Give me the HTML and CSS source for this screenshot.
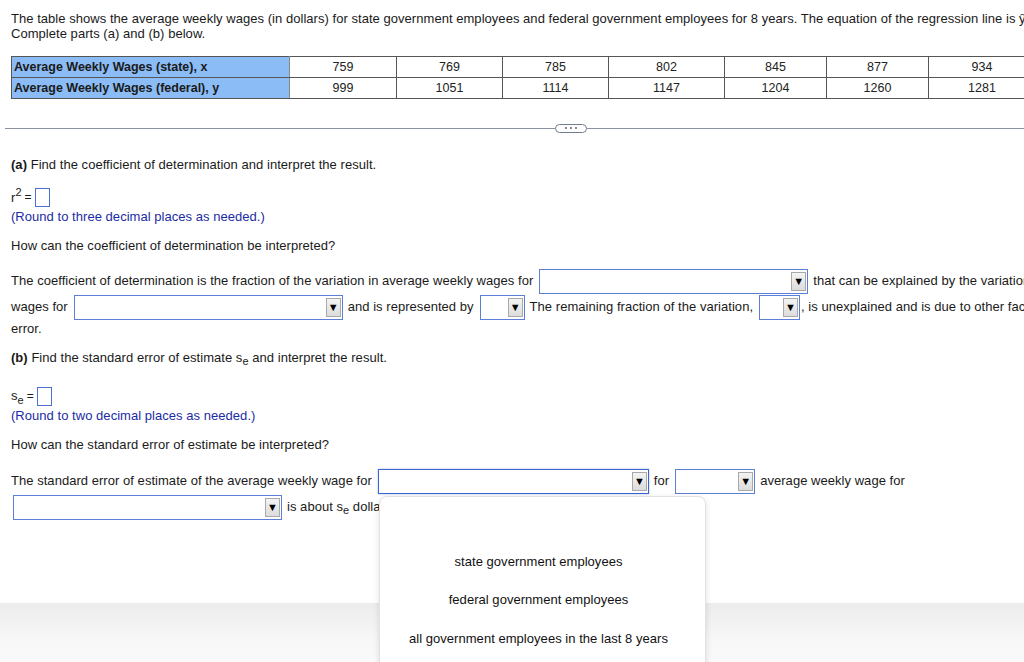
FILE: index.html
```html
<!DOCTYPE html>
<html>
<head>
<meta charset="utf-8">
<link rel="stylesheet" href="styles.css">
</head>
<body>
<div class="page">
  <div class="content">
    <div class="intro">
      <div class="line">The table shows the average weekly wages (in dollars) for state government employees and federal government employees for 8 years. The equation of the regression line is <span class="yhat">ŷ</span> = 1.264x + 37.49.</div>
      <div class="line">Complete parts (a) and (b) below.</div>
    </div>
    <table class="data">
      <tr>
        <th>Average Weekly Wages (state), x</th>
        <td class="c1">759</td><td class="c2">769</td><td class="c3">785</td><td class="c4">802</td><td class="c5">845</td><td class="c6">877</td><td class="c7">934</td>
      </tr>
      <tr>
        <th>Average Weekly Wages (federal), y</th>
        <td>999</td><td>1051</td><td>1114</td><td>1147</td><td>1204</td><td>1260</td><td>1281</td>
      </tr>
    </table>
  </div>

  <div class="divider">
    <span class="rule"></span>
    <span class="pill"><i></i><i></i><i></i></span>
    <span class="rule"></span>
  </div>

  <div class="content">
    <p class="q q-a"><b>(a)</b> Find the coefficient of determination and interpret the result.</p>
    <div class="answer r2"><span class="rvar">r<sup>2</sup></span> <span class="eq">=</span> <span class="box"></span></div>
    <p class="hint">(Round to three decimal places as needed.)</p>
    <p class="q q-how">How can the coefficient of determination be interpreted?</p>

    <div class="row row1"><span>The coefficient of determination is the fraction of the variation in average weekly wages for</span> <span class="sel w268"><span class="arr">▼</span></span> <span>that can be explained by the variation in average weekly</span></div>
    <div class="row row2"><span>wages for</span> <span class="sel w268"><span class="arr">▼</span></span> <span>and is represented by</span> <span class="sel w44"><span class="arr">▼</span></span> <span>The remaining fraction of the variation,</span> <span class="sel w40 tight"><span class="arr">▼</span></span><span class="comma">, is unexplained and is due to other factors or to sampling</span></div>
    <div class="row row3">error.</div>

    <p class="q q-b"><b>(b)</b> Find the standard error of estimate s<sub>e</sub> and interpret the result.</p>
    <div class="answer se"><span>s<sub>e</sub></span> <span class="eq">=</span> <span class="box"></span></div>
    <p class="hint">(Round to two decimal places as needed.)</p>
    <p class="q q-how2">How can the standard error of estimate be interpreted?</p>

    <div class="row row4"><span>The standard error of estimate of the average weekly wage for</span> <span class="sel w270 focus"><span class="arr">▼</span></span> <span>for</span> <span class="sel w79"><span class="arr">▼</span></span> <span>average weekly wage for</span></div>
    <div class="row row5"><span class="sel w268 first"><span class="arr">▼</span></span> <span>is about s<sub>e</sub> dollars.</span></div>
  </div>

  <div class="footer"></div>

  <div class="menu">
    <div class="opt"></div>
    <div class="opt">state government employees</div>
    <div class="opt">federal government employees</div>
    <div class="opt">all government employees in the last 8 years</div>
  </div>
</div>
</body>
</html>
```

FILE: styles.css
```css
html, body {
  margin: 0;
  padding: 0;
  overflow: hidden;
  background: #ffffff;
}
body {
  font-family: "Liberation Sans", Arial, sans-serif;
  font-size: 13px;
  letter-spacing: 0.04px;
  color: #1a1a1a;
  width: 1024px;
  height: 662px;
}
.page {
  position: relative;
  width: 1024px;
  height: 662px;
  overflow: hidden;
}
.content {
  padding-left: 11px;
  width: 1300px;
}
.intro {
  padding-top: 11px;
}
.line {
  line-height: 15px;
  height: 15px;
  white-space: nowrap;
}

table.data {
  margin-top: 15px;
  border-collapse: collapse;
  border: 1.5px solid #111;
  letter-spacing: 0;
}
table.data th,
table.data td {
  height: 20px;
  padding: 0;
  font-size: 12.5px;
  line-height: 20px;
  border: 1px solid #555;
}
table.data th {
  background: #8bbcf5;
  font-weight: bold;
  text-align: left;
  width: 275px;
  padding-left: 2px;
  border-right: 1px solid #888;
}
table.data td {
  text-align: center;
  color: #222;
}
.c1 { width: 106px; }
.c2 { width: 105px; }
.c3 { width: 105px; }
.c4 { width: 115px; }
.c5 { width: 101px; }
.c6 { width: 101px; }
.c7 { width: 106px; }

.divider {
  display: flex;
  align-items: center;
  margin-top: 28px;
  margin-left: 5px;
  width: 1131px;
  height: 2px;
}
.rule {
  flex: 1;
  height: 1px;
  background: #8b93a3;
}
.pill {
  width: 30px;
  height: 7px;
  border: 1px solid #727b8c;
  border-radius: 5px;
  display: flex;
  justify-content: center;
  align-items: center;
  gap: 3px;
  background: #fff;
}
.pill i {
  width: 2px;
  height: 2px;
  background: #5a6375;
  border-radius: 1px;
}

p { margin: 0; }
.q, .hint, .row, .answer {
  white-space: nowrap;
  line-height: 16px;
}
.q-a { margin-top: 28px; }
.answer {
  display: flex;
  align-items: center;
  gap: 3px;
  height: 18px;
}
.r2 { margin-top: 15px; }
.rvar {
  display: inline-flex;
  align-items: flex-start;
  padding-top: 2px;
}
.rvar sup {
  font-size: 11px;
  line-height: 11px;
  position: relative;
  top: -3px;
  margin-left: 0;
}
.eq { font-size: 12px; }
.box {
  display: inline-block;
  width: 13px;
  height: 17px;
  border: 1px solid #4a6fd6;
  background: #fff;
}
.hint {
  color: #1b2ca3;
  margin-top: 3px;
}
.q-how { margin-top: 13px; }

.row {
  display: flex;
  align-items: center;
  gap: 5px;
}
.row1 { margin-top: 14px; height: 26px; }
.row2 { height: 26px; }
.row3 { height: 18px; margin-top: 0; }
.tight { margin-right: -5px; }
.comma { padding-left: 1px; }

.sel {
  display: inline-flex;
  justify-content: flex-end;
  align-items: center;
  height: 25px;
  box-sizing: border-box;
  border: 1px solid #5b7fd6;
  background: #fff;
  padding-right: 1px;
  margin-left: 1px;
}
.sel.focus {
  border: 1.5px solid #3d64d0;
  box-shadow: 0 0 2px rgba(60, 100, 210, 0.4);
}
.w268 { width: 269px; }
.w270 { width: 271px; }
.w44 { width: 45px; }
.w40 { width: 41px; }
.w79 { width: 80px; }
.arr {
  width: 15px;
  height: 19px;
  box-sizing: border-box;
  border: 1px solid #a9a9a9;
  background: linear-gradient(#f4f4f4, #dcdcdc);
  font-size: 11px;
  line-height: 17px;
  text-align: center;
  color: #000;
}

sub {
  font-size: 11px;
  vertical-align: -3px;
  line-height: 0;
}

.q-b { margin-top: 12px; }
.se { margin-top: 21px; }
.se sub { vertical-align: -4px; }
.q-how2 { margin-top: 13px; }
.row4 { margin-top: 15px; height: 26px; }
.row5 { height: 26px; }
.sel.first { margin-left: 2px; }

.footer {
  position: absolute;
  left: 0;
  right: 0;
  top: 603px;
  height: 59px;
  background: linear-gradient(#ececec, #f7f7f7 60%, #fafafa);
}

.menu {
  position: absolute;
  left: 379px;
  top: 496px;
  width: 327px;
  height: 180px;
  background: #fff;
  border: 1px solid #e2e2e2;
  border-radius: 8px;
  box-shadow: 0 2px 6px rgba(0, 0, 0, 0.12);
  box-sizing: border-box;
  padding-top: 7px;
  padding-right: 8px;
}
.opt {
  height: 38.5px;
  line-height: 38.5px;
  text-align: center;
  white-space: nowrap;
  color: #111;
}
```
